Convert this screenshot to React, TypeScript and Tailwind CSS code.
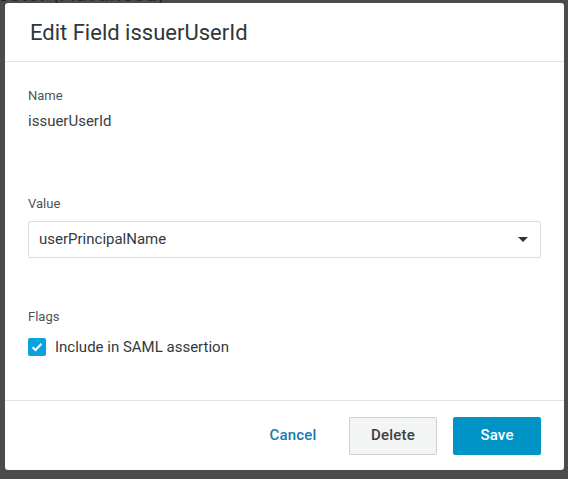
import React from 'react';

const font = { fontFamily: 'Roboto, "Liberation Sans", Arial, sans-serif' };

const App = () => {
  return (
    <div className="relative w-[568px] h-[479px] overflow-hidden bg-[#4b4b4b]" style={font}>
      {/* page behind the overlay */}
      <div className="-mt-[19px] -ml-[3px] text-[22px] leading-[26px] text-[#262626]">ector (Advanced)</div>

      {/* Modal */}
      <div className="absolute left-[5px] top-[3px] w-[559px] h-[467px] bg-white rounded-[3px] flex flex-col">
        <div className="h-[59px] border-b border-[#e2e2e2] flex items-center pl-[25px] pt-[1px]">
          <h2 className="text-[22px] text-[#30363b] font-normal">Edit Field issuerUserId</h2>
        </div>

        <div className="flex-1 px-[23px] pt-[26px]">
          <div className="text-[13px] leading-[16px] text-[#4d5459]">Name</div>
          <div className="mt-[7px] text-[15px] leading-[20px] text-[#3a4045]">issuerUserId</div>

          <div className="mt-[65px] text-[13px] leading-[16px] text-[#4d5459]">Value</div>
          <div className="mt-[9px] h-[37px] border border-[#dcdcdc] rounded-[2px] flex items-center justify-between pl-[10px] pr-[12px]">
            <span className="text-[15px] text-[#333a3f]">userPrincipalName</span>
            <svg width="10" height="5" viewBox="0 0 10 5">
              <path d="M0 0 L10 0 L5 5 Z" fill="#2f3438" />
            </svg>
          </div>

          <div className="mt-[51px] text-[13px] leading-[16px] text-[#4d5459]">Flags</div>
          <label className="mt-[11px] flex items-center gap-[9px]">
            <span className="w-[18px] h-[18px] rounded-[2px] bg-[#0aa2de] flex items-center justify-center">
              <svg width="12" height="10" viewBox="0 0 12 10">
                <path d="M1.5 5.2 L4.5 8 L10.5 1.8" fill="none" stroke="white" strokeWidth="2" />
              </svg>
            </span>
            <span className="text-[15px] text-[#333a3f]">Include in SAML assertion</span>
          </label>
        </div>

        <div className="h-[70px] border-t border-[#e2e2e2] flex items-center justify-end gap-[16px] pr-[23px]">
          <button className="w-[80px] h-[38px] text-[15px] font-medium tracking-[0.2px] text-[#1b79b0]">Cancel</button>
          <button className="w-[88px] h-[38px] rounded-[2px] border border-[#cfd1d1] bg-[#f3f4f4] text-[15px] font-medium tracking-[0.2px] text-[#3a4045]">
            Delete
          </button>
          <button className="w-[88px] h-[38px] rounded-[2px] bg-[#0093c6] text-[15px] font-medium tracking-[0.2px] text-white">
            Save
          </button>
        </div>
      </div>
    </div>
  );
};

export default App;
